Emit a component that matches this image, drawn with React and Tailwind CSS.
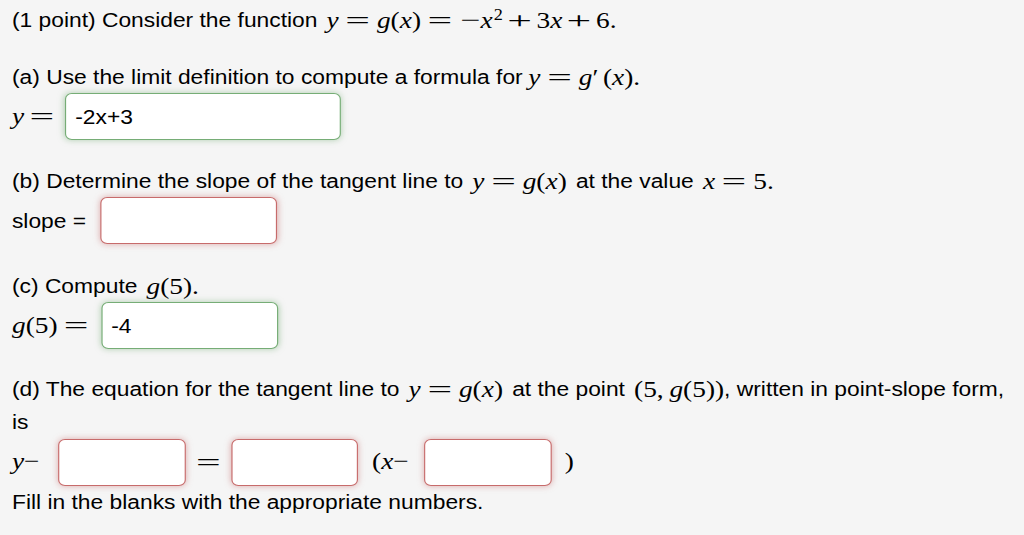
import React from "react";

const SERIF = { fontFamily: '"Liberation Serif", "Times New Roman", serif' };

const M = ({ children }) => (
  <span className="text-[24px] leading-none whitespace-nowrap" style={SERIF}>
    {children}
  </span>
);
const I = ({ children }) => <i className="italic">{children}</i>;
const Rel = ({ c = "=" }) => <span className="inline-block mx-[10px] scale-x-[1.6]">{c}</span>;
const Bin = ({ c = "+" }) => <span className="inline-block mx-[8px] scale-x-[1.6]">{c}</span>;

const Box = ({ ok, value, w }) => (
  <div
    className={
      "h-[47px] shrink-0 rounded-[6px] bg-white border-[1.5px] flex items-center pl-[8px] text-[20px] text-black " +
      (ok
        ? "border-[#76ad76] shadow-[0_0_6px_rgba(118,173,118,0.55)]"
        : "border-[#c76b6b] shadow-[0_0_6px_rgba(199,107,107,0.55)]")
    }
    style={{ width: w }}
  >
    {value}
  </div>
);

export default function App() {
  return (
    <div className="w-[1024px] h-[535px] bg-[#f5f5f5] overflow-hidden">
      <div
        className="w-[898px] origin-left scale-x-[1.14] text-black text-[20px] pl-[10.5px]"
        style={{ fontFamily: '"Liberation Sans", Arial, sans-serif' }}
      >
        <div className="flex flex-col">
          <div className="h-[24px] mt-[8px] flex items-center whitespace-nowrap">
            <span className="mr-[8px]">(1 point) Consider the function</span>
            <M>
              <I>y</I>
              <Rel />
              <I>g</I>(<I>x</I>)<Rel />
              <span className="inline-block scale-x-[1.3] ml-[3px] mr-[2px]">−</span>
              <I>x</I>
              <sup className="text-[16px] ml-[1px]">2</sup>
              <Bin />3<I>x</I>
              <Bin />6.
            </M>
          </div>

          <div className="h-[24px] mt-[33px] flex items-center whitespace-nowrap">
            <span className="mr-[5px]">(a) Use the limit definition to compute a formula for</span>
            <M>
              <I>y</I>
              <Rel />
              <I>g</I>′<span className="ml-[4px]">(</span>
              <I>x</I>).
            </M>
          </div>
          <div className="h-[47px] mt-[4px] flex items-center">
            <div className="w-[46.5px] shrink-0">
              <M>
                <I>y</I>
                <span className="inline-block ml-[9px] scale-x-[1.6]">=</span>
              </M>
            </div>
            <Box ok value="-2x+3" w="242px" />
          </div>

          <div className="h-[24px] mt-[29px] flex items-center whitespace-nowrap">
            <span className="mr-[8px]">(b) Determine the slope of the tangent line to</span>
            <M>
              <I>y</I>
              <Rel />
              <I>g</I>(<I>x</I>)
            </M>
            <span className="mx-[8px]">at the value</span>
            <M>
              <I>x</I>
              <Rel />
              5.
            </M>
          </div>
          <div className="h-[47px] mt-[4px] flex items-center">
            <div className="w-[77px] shrink-0">slope =</div>
            <Box w="155px" />
          </div>

          <div className="h-[24px] mt-[30px] flex items-center whitespace-nowrap">
            <span className="mr-[8px]">(c) Compute</span>
            <M>
              <I>g</I>(5).
            </M>
          </div>
          <div className="h-[47px] mt-[4px] flex items-center">
            <div className="w-[78px] shrink-0">
              <M>
                <I>g</I>(5)
                <span className="inline-block ml-[10px] scale-x-[1.6]">=</span>
              </M>
            </div>
            <Box ok value="-4" w="155px" />
          </div>

          <div className="h-[24px] mt-[28px] flex items-center whitespace-nowrap">
            <span className="mr-[8px]">(d) The equation for the tangent line to</span>
            <M>
              <I>y</I>
              <Rel />
              <I>g</I>(<I>x</I>)
            </M>
            <span className="mx-[8px]">at the point</span>
            <M>
              (5,<span className="ml-[5px]"></span>
              <I>g</I>(5))
            </M>
            <span>, written in point-slope form,</span>
          </div>
          <div className="h-[24px] mt-[9px] flex items-center">is</div>
          <div className="h-[48px] mt-[4px] flex items-center">
            <div className="w-[40.4px] shrink-0">
              <M>
                <I>y</I>−
              </M>
            </div>
            <Box w="112px" />
            <div className="w-[40.5px] shrink-0 flex justify-center">
              <M>
                <span className="inline-block scale-x-[1.6]">=</span>
              </M>
            </div>
            <Box w="111px" />
            <div className="w-[58px] shrink-0 pl-[12px]">
              <M>
                (<I>x</I>−
              </M>
            </div>
            <Box w="112px" />
            <div className="ml-[11px]">
              <M>)</M>
            </div>
          </div>
          <div className="h-[24px] mt-[4px] flex items-center">Fill in the blanks with the appropriate numbers.</div>
        </div>
      </div>
    </div>
  );
}
